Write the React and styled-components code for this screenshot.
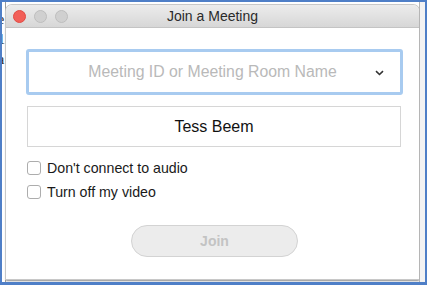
import styled, { createGlobalStyle } from "styled-components";

const GlobalStyle = createGlobalStyle`
  html, body {
    margin: 0;
    padding: 0;
    background: #ffffff;
  }
  * {
    box-sizing: border-box;
  }
`;

const Frame = styled.div`
  width: 427px;
  height: 285px;
  border: 2px solid #4f7fc7;
  border-bottom-width: 3px;
  background: #ffffff;
  display: flex;
  overflow: hidden;
`;

const DesktopEdge = styled.div`
  width: ${(props) => props.width}px;
  flex-shrink: 0;
  overflow: hidden;
  display: flex;
  flex-direction: column;
  padding-top: ${(props) => props.top || 0}px;
  gap: 8px;
  font-family: "Liberation Serif", serif;
  font-size: 14px;
  line-height: 12px;
  color: #222;
  white-space: nowrap;
  background: ${(props) => props.bg || "#ffffff"};
  border-right: ${(props) => (props.line ? "1px solid #9a9a9a" : "none")};
  border-left: ${(props) => (props.lineLeft ? "1px solid #b5b5b5" : "none")};
`;

const EdgeText = styled.span`
  display: block;
  margin-left: ${(props) => props.shift || 0}px;
`;

const Window = styled.div`
  width: 413px;
  height: 274px;
  margin-top: 3px;
  flex-shrink: 0;
  background: #ffffff;
  border-radius: 6px 6px 0 0;
  display: flex;
  flex-direction: column;
  box-shadow: 0 0 0 1px #c8c8c8, 0 2px 2px #8a8a8a;
  overflow: hidden;
`;

const TitleBar = styled.div`
  height: 23px;
  flex-shrink: 0;
  background: linear-gradient(#ececec, #d7d7d7);
  border-bottom: 1px solid #c4c4c4;
  position: relative;
  display: flex;
  align-items: center;
  justify-content: center;
`;

const Lights = styled.div`
  position: absolute;
  left: 7px;
  top: 5px;
  display: flex;
  gap: 8px;
`;

const Light = styled.span`
  width: 13px;
  height: 13px;
  border-radius: 50%;
  background: ${(props) => (props.red ? "#f25f58" : "#d0d0d0")};
  border: 1px solid ${(props) => (props.red ? "#e04b44" : "#bdbdbd")};
`;

const Title = styled.div`
  font-family: "Liberation Sans", Arial, sans-serif;
  font-size: 14px;
  color: #2a2a2a;
`;

const Body = styled.div`
  flex: 1;
  display: flex;
  flex-direction: column;
  padding: 21px 16px 0 20px;
`;

const MeetingField = styled.div`
  height: 46px;
  width: 377px;
  border: 3px solid #a8cbf0;
  border-radius: 3px;
  display: flex;
  align-items: center;
  position: relative;
  font-family: "Liberation Sans", Arial, sans-serif;
  font-size: 15.8px;
  color: #b9b9b9;
  justify-content: center;
  padding-right: 4px;
`;

const Chevron = styled.svg`
  position: absolute;
  right: 16px;
  top: 18px;
`;

const NameField = styled.div`
  height: 41px;
  width: 374px;
  margin: 11px 0 0 1px;
  border: 1px solid #d6d6d6;
  display: flex;
  align-items: center;
  justify-content: center;
  font-family: "Liberation Sans", Arial, sans-serif;
  font-size: 16px;
  color: #111;
`;

const Options = styled.div`
  display: flex;
  flex-direction: column;
  gap: 9px;
  margin: 13px 0 0 1px;
`;

const Option = styled.label`
  display: flex;
  align-items: center;
  gap: 6px;
  font-family: "Liberation Sans", Arial, sans-serif;
  font-size: 14.2px;
  color: #1a1a1a;
  height: 15px;
`;

const Box = styled.span`
  width: 14px;
  height: 14px;
  border: 1px solid #adadad;
  border-radius: 3px;
  background: #ffffff;
`;

const Footer = styled.div`
  display: flex;
  justify-content: center;
  margin-top: 26px;
`;

const JoinButton = styled.button`
  width: 167px;
  height: 32px;
  border-radius: 16px;
  border: 1px solid #d3d3d3;
  background: #ececec;
  color: #c3c3c3;
  font-family: "Liberation Sans", Arial, sans-serif;
  font-weight: 700;
  font-size: 14px;
`;

export default function App() {
  return (
    <>
      <GlobalStyle />
      <Frame>
        <DesktopEdge width={4} top={12} line>
          <EdgeText shift={-4}>e</EdgeText>
          <EdgeText shift={-4}>1</EdgeText>
          <EdgeText shift={-4}>a</EdgeText>
        </DesktopEdge>
        <Window>
          <TitleBar>
            <Lights>
              <Light red />
              <Light />
              <Light />
            </Lights>
            <Title>Join a Meeting</Title>
          </TitleBar>
          <Body>
            <MeetingField>
              Meeting ID or Meeting Room Name
              <Chevron width="9" height="6" viewBox="0 0 9 6">
                <path d="M1 1.2 L4.5 4.5 L8 1.2" fill="none" stroke="#333" strokeWidth="1.6" />
              </Chevron>
            </MeetingField>
            <NameField>Tess Beem</NameField>
            <Options>
              <Option>
                <Box />
                Don't connect to audio
              </Option>
              <Option>
                <Box />
                Turn off my video
              </Option>
            </Options>
            <Footer>
              <JoinButton>Join</JoinButton>
            </Footer>
          </Body>
        </Window>
        <DesktopEdge width={6} bg="#f3f3f3" lineLeft />
      </Frame>
    </>
  );
}
